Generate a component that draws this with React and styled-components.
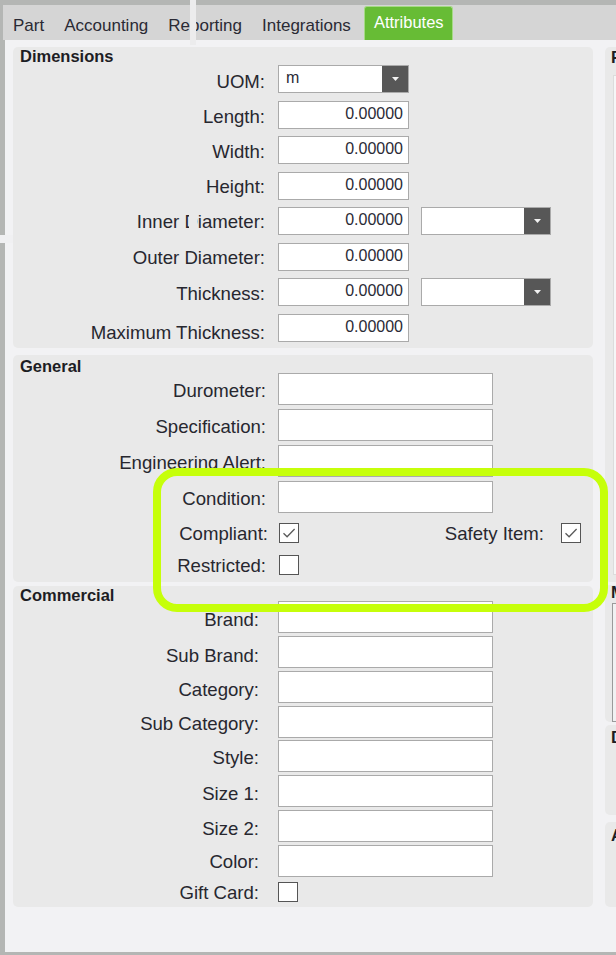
import React from "react";
import styled, { createGlobalStyle } from "styled-components";

const Global = createGlobalStyle`
  html, body { margin: 0; padding: 0; background: #b4b6b4; overflow: hidden; }
  * { box-sizing: border-box; }
`;

const Screen = styled.div`
  position: relative;
  width: 616px;
  height: 955px;
  background: #b4b6b4;
  padding: 5px 0 3px 5px;
  overflow: hidden;
  font-family: "Liberation Sans", Arial, sans-serif;
`;

const Window = styled.div`
  width: 920px;
  height: 100%;
  background: #f2f2f4;
  display: flex;
  flex-direction: column;
`;

const TabBar = styled.div`
  flex: none;
  height: 35px;
  background: #d5d5d5;
  display: flex;
  align-items: stretch;
  margin-left: -2px;
`;

const Tab = styled.div`
  display: flex;
  align-items: center;
  padding: ${(p) => (p.$active ? "0 8px 2px 9px" : "6px 10px 0 10px")};
  margin: ${(p) => (p.$active ? "1px 0 0 3px" : "0")};
  font-size: ${(p) => (p.$active ? "16.5px" : "17px")};
  color: ${(p) => (p.$active ? "#ffffff" : "#2a2a34")};
  background: ${(p) => (p.$active ? "#67bc35" : "transparent")};
  border: ${(p) => (p.$active ? "1px solid #a6da86" : "none")};
  border-bottom: none;
  border-radius: 3px 3px 0 0;
  white-space: nowrap;
`;

const Body = styled.div`
  flex: 1;
  display: grid;
  grid-template-columns: 580px 300px;
  column-gap: 12px;
  align-items: start;
  padding: 7px 0 0 8px;
`;

const Column = styled.div`
  display: flex;
  flex-direction: column;
`;

const Panel = styled.section`
  background: #e9e9e9;
  border-radius: 5px;
  padding: 0 0 ${(p) => p.$pb}px 7px;
  margin-top: ${(p) => p.$mt || 0}px;
  display: flex;
  flex-direction: column;
`;

const Title = styled.div`
  height: ${(p) => p.$h}px;
  line-height: ${(p) => p.$lh}px;
  font-size: 16.5px;
  font-weight: bold;
  color: #1d1d24;
  white-space: nowrap;
`;

const Rows = styled.div`
  display: flex;
  flex-direction: column;
  gap: ${(p) => p.$gap}px;
`;

const Row = styled.div`
  display: flex;
  align-items: center;
  height: ${(p) => p.$h}px;
  margin-top: ${(p) => p.$mt || 0}px;
  padding-right: ${(p) => p.$pr || 0}px;
`;

const Label = styled.label`
  flex: none;
  width: ${(p) => p.$w}px;
  margin-right: ${(p) => p.$gap}px;
  padding-top: ${(p) => p.$dy || 0}px;
  text-align: right;
  font-size: 18.6px;
  color: #27272f;
  white-space: nowrap;
`;

const TextBox = styled.div`
  flex: none;
  width: ${(p) => p.$w}px;
  height: 100%;
  background: #ffffff;
  border: 1px solid #aaaaaa;
  font-size: 16px;
  color: #2a2a36;
  display: flex;
  align-items: center;
  justify-content: ${(p) => (p.$num ? "flex-end" : "flex-start")};
  padding: 0 5px 2px 7px;
`;

const Select = styled.div`
  flex: none;
  width: ${(p) => p.$w}px;
  height: 100%;
  margin-left: ${(p) => p.$ml || 0}px;
  background: #ffffff;
  border: 1px solid #aaaaaa;
  display: flex;
  align-items: stretch;
`;

const SelectValue = styled.div`
  flex: 1;
  display: flex;
  align-items: center;
  padding: 0 0 3px 7px;
  font-size: 16px;
  color: #2a2a36;
`;

const SelectButton = styled.div`
  flex: none;
  width: 26px;
  background: #575757;
  display: flex;
  align-items: center;
  justify-content: center;
`;

const Box = styled.div`
  flex: none;
  width: 20px;
  height: 20px;
  background: #ffffff;
  border: 1.5px solid #555555;
  display: flex;
  align-items: center;
  justify-content: center;
`;

const CheckGroup = styled.div`
  margin-left: auto;
  display: flex;
  align-items: center;
  gap: 17px;
`;

const PlainLabel = styled.span`
  font-size: 18.6px;
  color: #27272f;
  white-space: nowrap;
  padding-top: 2px;
`;

const RPanel = styled.section`
  background: #e9e9e9;
  border-radius: 5px;
  height: ${(p) => p.$h}px;
  margin-top: ${(p) => p.$mt || 0}px;
  padding: 0 0 ${(p) => p.$pb || 0}px 6px;
  display: flex;
  flex-direction: column;
`;

const RBox = styled.div`
  flex: 1;
  margin-left: ${(p) => p.$ml || 0}px;
  background: ${(p) => p.$bg};
  border: 1px solid ${(p) => p.$bc};
`;

const Mask = styled.div`
  position: absolute;
  pointer-events: none;
  left: ${(p) => p.$x}px;
  top: ${(p) => p.$y}px;
  width: ${(p) => p.$w}px;
  height: ${(p) => p.$h}px;
  background: ${(p) => p.$c};
`;

const Highlight = styled.div`
  position: absolute;
  pointer-events: none;
  left: 153px;
  top: 468px;
  width: 455px;
  height: 144px;
  border: 8px solid #c6ff0a;
  border-radius: 24px;
`;

const Arrow = () => (
  <svg width="9" height="6" viewBox="0 0 9 6">
    <path d="M1 1h7L4.5 5z" fill="#f2f2f2" />
  </svg>
);

const Check = ({ on }) => (
  <Box>
    {on && (
      <svg width="16" height="16" viewBox="0 0 16 16">
        <path d="M2.5 8.2l3.6 3.6L13.6 4" fill="none" stroke="#5a5a5a" strokeWidth="1.3" />
      </svg>
    )}
  </Box>
);

const dims = [
  { label: "UOM:", select: "m", dy: 6 },
  { label: "Length:", value: "0.00000", dy: 4 },
  { label: "Width:", value: "0.00000", dy: 3 },
  { label: "Height:", value: "0.00000", dy: 3 },
  { label: "Inner Diameter:", value: "0.00000", extra: true, dy: 2 },
  { label: "Outer Diameter:", value: "0.00000", dy: 2 },
  { label: "Thickness:", value: "0.00000", extra: true, dy: 4 },
  { label: "Maximum Thickness:", value: "0.00000", dy: 10 },
];

const general = ["Durometer:", "Specification:", "Engineering Alert:", "Condition:"];

const commercial = [
  { label: "Brand:", dy: 6 },
  { label: "Sub Brand:", dy: 8 },
  { label: "Category:", dy: 6 },
  { label: "Sub Category:", dy: 4 },
  { label: "Style:", dy: 4 },
  { label: "Size 1:", dy: 5 },
  { label: "Size 2:", dy: 5 },
  { label: "Color:", dy: 3 },
];

export default function App() {
  return (
    <>
      <Global />
      <Screen>
        <Window>
          <TabBar>
            <Tab>Part</Tab>
            <Tab>Accounting</Tab>
            <Tab>Reporting</Tab>
            <Tab>Integrations</Tab>
            <Tab $active>Attributes</Tab>
          </TabBar>
          <Body>
            <Column>
              <Panel $pb={6}>
                <Title $h={18} $lh={18}>Dimensions</Title>
                <Rows $gap={7.57}>
                  {dims.map((d) => (
                    <Row key={d.label} $h={28}>
                      <Label $w={245} $gap={13} $dy={d.dy}>
                        {d.label}
                      </Label>
                      {d.select ? (
                        <Select $w={131}>
                          <SelectValue>{d.select}</SelectValue>
                          <SelectButton>
                            <Arrow />
                          </SelectButton>
                        </Select>
                      ) : (
                        <TextBox $w={131} $num>
                          {d.value}
                        </TextBox>
                      )}
                      {d.extra && (
                        <Select $w={130} $ml={12}>
                          <SelectValue />
                          <SelectButton>
                            <Arrow />
                          </SelectButton>
                        </Select>
                      )}
                    </Row>
                  ))}
                </Rows>
              </Panel>

              <Panel $mt={7} $pb={7}>
                <Title $h={18} $lh={22}>General</Title>
                <Rows $gap={4}>
                  {general.map((g) => (
                    <Row key={g} $h={32}>
                      <Label $w={246} $gap={12} $dy={4}>
                        {g}
                      </Label>
                      <TextBox $w={215} />
                    </Row>
                  ))}
                </Rows>
                <Row $h={20} $mt={10} $pr={12}>
                  <Label $w={248} $gap={11} $dy={3}>
                    Compliant:
                  </Label>
                  <Check on />
                  <CheckGroup>
                    <PlainLabel>Safety Item:</PlainLabel>
                    <Check on />
                  </CheckGroup>
                </Row>
                <Row $h={20} $mt={12}>
                  <Label $w={246} $gap={13} $dy={3}>
                    Restricted:
                  </Label>
                  <Check />
                </Row>
              </Panel>

              <Panel $mt={4} $pb={5}>
                <Title $h={15} $lh={18}>Commercial</Title>
                <Rows $gap={2.86}>
                  {commercial.map((c) => (
                    <Row key={c.label} $h={32}>
                      <Label $w={239} $gap={19} $dy={c.dy}>
                        {c.label}
                      </Label>
                      <TextBox $w={215} />
                    </Row>
                  ))}
                </Rows>
                <Row $h={20} $mt={5}>
                  <Label $w={239} $gap={19} $dy={2}>
                    Gift Card:
                  </Label>
                  <Check />
                </Row>
              </Panel>
            </Column>

            <Column>
              <RPanel $h={535} $pb={7}>
                <Title $h={28} $lh={20}>Features</Title>
                <RBox $ml={2} $bg="#f6f6f7" $bc="#dcdcdc" />
              </RPanel>
              <RPanel $h={137} $mt={3}>
                <Title $h={18} $lh={14}>Materials</Title>
                <RBox $ml={1} $bg="#f1f1f2" $bc="#9a9a9a" />
              </RPanel>
              <RPanel $h={90} $mt={3}>
                <Title $h={24} $lh={24}>Description</Title>
              </RPanel>
              <RPanel $h={85} $mt={7}>
                <Title $h={24} $lh={26}>Additional</Title>
              </RPanel>
            </Column>
          </Body>
        </Window>

        <Mask $x={190} $y={0} $w={6} $h={45} $c="#ececed" />
        <Mask $x={189} $y={211} $w={8} $h={24} $c="#e9e9e9" />
        <Mask $x={0} $y={235} $w={13} $h={8} $c="#f0f0f2" />
        <Highlight />
      </Screen>
    </>
  );
}
